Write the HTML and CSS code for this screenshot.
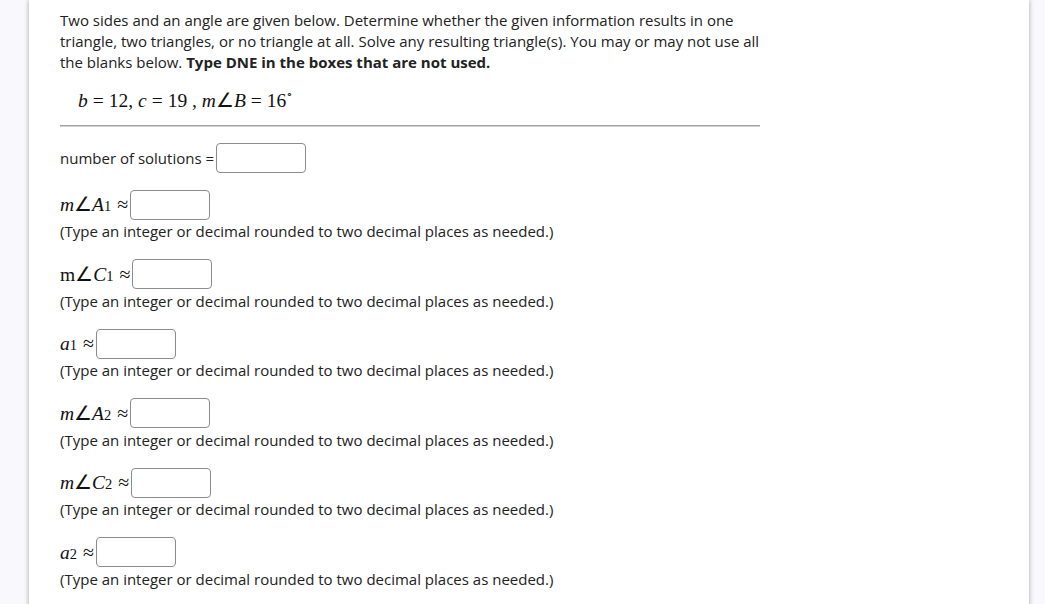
FILE: index.html
```html
<!DOCTYPE html>
<html>
<head>
<meta charset="utf-8">
<link rel="stylesheet" href="styles.css">
</head>
<body>
<div class="page">
  <div class="card">
    <p class="intro">Two sides and an angle are given below. Determine whether the given information results in one triangle, two triangles, or no triangle at all. Solve any resulting triangle(s). You may or may not use all the blanks below. <b>Type DNE in the boxes that are not used.</b></p>
    <div class="given"><i>b</i><span class="op">=</span>12, <i>c</i><span class="op">=</span>19 , <i>m</i>∠<i>B</i><span class="op">=</span>16<sup>∘</sup></div>
    <hr class="rule">
    <div class="sol-row">number of solutions =<span class="box wide"></span></div>

    <div class="item">
      <div class="row"><span class="m"><i>m</i>∠<i>A</i><sub>1</sub><span class="ap">≈</span></span><span class="box"></span></div>
      <div class="hint">(Type an integer or decimal rounded to two decimal places as needed.)</div>
    </div>
    <div class="item">
      <div class="row"><span class="m">m∠<i>C</i><sub>1</sub><span class="ap">≈</span></span><span class="box"></span></div>
      <div class="hint">(Type an integer or decimal rounded to two decimal places as needed.)</div>
    </div>
    <div class="item">
      <div class="row"><span class="m"><i>a</i><sub>1</sub><span class="ap">≈</span></span><span class="box"></span></div>
      <div class="hint">(Type an integer or decimal rounded to two decimal places as needed.)</div>
    </div>
    <div class="item">
      <div class="row"><span class="m"><i>m</i>∠<i>A</i><sub>2</sub><span class="ap">≈</span></span><span class="box"></span></div>
      <div class="hint">(Type an integer or decimal rounded to two decimal places as needed.)</div>
    </div>
    <div class="item">
      <div class="row"><span class="m"><i>m</i>∠<i>C</i><sub>2</sub><span class="ap">≈</span></span><span class="box"></span></div>
      <div class="hint">(Type an integer or decimal rounded to two decimal places as needed.)</div>
    </div>
    <div class="item">
      <div class="row"><span class="m"><i>a</i><sub>2</sub><span class="ap">≈</span></span><span class="box"></span></div>
      <div class="hint">(Type an integer or decimal rounded to two decimal places as needed.)</div>
    </div>
  </div>
</div>
</body>
</html>
```
FILE: styles.css
```css
html, body {
  margin: 0;
  padding: 0;
  background: #f9f8fd;
  height: 100%;
  overflow: hidden;
}
.page {
  padding-left: 29px;
  width: 1000px;
}
.card {
  background: #fff;
  box-shadow: 0 0 5px rgba(0,0,0,0.35);
  height: 640px;
  padding: 10px 0 0 31px;
  box-sizing: border-box;
  font-family: "Open Sans", sans-serif;
  font-size: 15px;
  color: #222;
}
.intro {
  margin: 0;
  width: 700px;
  line-height: 21px;
}
.intro b { font-weight: 700; }
.given {
  font-family: "Liberation Serif", serif;
  font-size: 19.5px;
  margin: 16px 0 0 18px;
  line-height: 24px;
  color: #111;
}
.given i { font-style: italic; }
.given .op { margin: 0 5px; }
.given sup { font-size: 11px; vertical-align: 9px; line-height: 0; }
.rule {
  width: 700px;
  margin: 12px 0 0 0;
  border: 0;
  border-top: 1px solid #a0a0a0;
  border-bottom: 1px solid #d0d0d0;
}
.sol-row {
  display: flex;
  align-items: center;
  margin-top: 16px;
}
.box {
  display: inline-block;
  width: 78px;
  height: 28px;
  border: 1px solid #8c8c8c;
  border-radius: 4px;
  background: #fff;
  margin-left: 2px;
}
.box.wide { width: 88px; }
.item { margin-top: 16.5px; }
.sol-row + .item { margin-top: 16px; }
.row {
  display: flex;
  align-items: center;
  height: 31px;
}
.m {
  font-family: "Liberation Serif", serif;
  font-size: 19.5px;
  display: inline-flex;
  align-items: baseline;
  color: #111;
}
.m sub {
  font-size: 14.5px;
  vertical-align: -4px;
  line-height: 0;
}
.ap { margin-left: 6px; font-size: 20px; }
.hint { line-height: 21px; margin-top: 1px; }
```
